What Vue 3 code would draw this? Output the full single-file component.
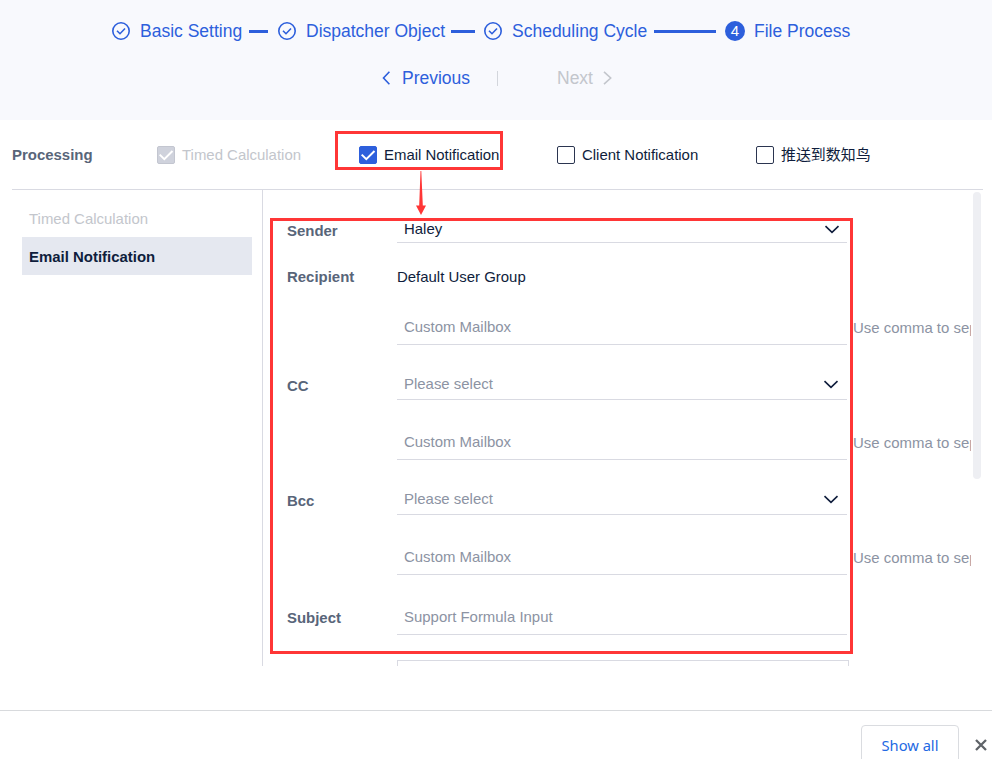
<template>
    <div id="schedule">
        <header class="head">
            <div class="steps">
                <template v-for="(step, i) in steps" :key="step">
                    <div class="step">
                        <svg v-if="i < 3" class="step-icon" viewBox="0 0 18 18">
                            <circle cx="9" cy="9" r="8.2" />
                            <path d="M5 8.700l3 3 5-5.200" />
                        </svg>
                        <i v-else class="badge">4</i>
                        <span>{{ step }}</span>
                    </div>
                    <div v-if="i < 3" class="line"></div>
                </template>
            </div>
            <div class="pager">
                <a class="prev">
                    <svg width="8" height="14" viewBox="0 0 8 14"><path d="M7.400 .8L1.500 7l5.900 6.200" /></svg>
                    <span>Previous</span>
                </a>
                <a class="next">
                    <span>Next</span>
                    <svg width="9" height="14" viewBox="0 0 9 14"><path d="M1 .8L7.700 7 1 13.200" /></svg>
                </a>
            </div>
        </header>

        <div class="processing">
            <strong>Processing</strong>
            <label v-for="item in options" :key="item.name" :class="item.state">
                <i class="box">
                    <svg v-if="item.state" width="16" height="16" viewBox="0 0 16 16"><path d="M1.700 7.600L6.300 12.200l8.200-8.200" /></svg>
                </i>
                <span>{{ item.name }}</span>
            </label>
        </div>

        <main class="content">
            <ul class="side">
                <li class="disabled">Timed Calculation</li>
                <li class="active">Email Notification</li>
            </ul>
            <div class="form">
                <div v-for="(row, i) in rows" :key="i" class="row" :class="row.type">
                    <b>{{ row.label }}</b>
                    <div class="field" :class="{ filled: row.filled }">
                        <span>{{ row.text }}</span>
                        <svg v-if="row.arrow" width="16" height="9" viewBox="0 0 16 9"><path d="M1.500 1.200L8 7.400l6.500-6.200" /></svg>
                    </div>
                    <span v-if="row.type === 'mail'" class="hint">Use comma to separate</span>
                </div>
                <div class="editor"></div>
            </div>
            <div class="scrollbar"></div>
        </main>

        <footer class="downloads">
            <button>Show all</button>
            <svg width="12" height="12" viewBox="0 0 12 12"><path d="M1 1l10 10M11 1L1 11" /></svg>
        </footer>

        <div class="mark mark-option"></div>
        <svg class="mark-arrow" width="12" height="44" viewBox="0 0 12 44">
            <path d="M5.500 0h.8l1.500 34.500H11L6 44 1 34.500h3.200z" />
        </svg>
        <div class="mark mark-form"></div>
    </div>
</template>

<script setup>
import { ref } from 'vue'

const steps = ref(['Basic Setting', 'Dispatcher Object', 'Scheduling Cycle', 'File Process'])

const options = ref([
    { name: 'Timed Calculation', state: 'disabled' },
    { name: 'Email Notification', state: 'checked' },
    { name: 'Client Notification', state: '' },
    { name: '推送到数知鸟', state: '' },
])

// type decides the height of the row
const rows = ref([
    { label: 'Sender', text: 'Haley', type: 'sender', arrow: true, filled: true },
    { label: 'Recipient', text: 'Default User Group', type: 'plain', filled: true },
    { label: '', text: 'Custom Mailbox', type: 'mail' },
    { label: 'CC', text: 'Please select', type: 'select', arrow: true },
    { label: '', text: 'Custom Mailbox', type: 'mail' },
    { label: 'Bcc', text: 'Please select', type: 'select', arrow: true },
    { label: '', text: 'Custom Mailbox', type: 'mail' },
    { label: 'Subject', text: 'Support Formula Input', type: 'subject' },
])
</script>

<style>
body {
    background-color: #fff;
    overflow: hidden;
}
</style>

<style scoped>
#schedule {
    position: relative;
    height: 759px;
    overflow: hidden;
    font-family: "Liberation Sans", "Noto Sans CJK SC", sans-serif;
    font-size: 14.950px;
    line-height: 20px;
    color: #0f1d3c;
    white-space: nowrap;
}
#schedule svg {
    display: block;
    flex: none;
    fill: none;
    stroke: currentColor;
    stroke-width: 1.6;
}
.head {
    height: 120px;
    background-color: #f8f9fd;
    color: #2d5fdc;
    font-size: 17.5px;
}
.steps {
    display: grid;
    grid-template-columns: 137px 29px 173px 33px 170px 71px auto;
    align-items: center;
    height: 62px;
    padding-left: 112px;
}
.step {
    display: flex;
    align-items: center;
    gap: 10px;
}
.step-icon {
    width: 18px;
    height: 18px;
}
.line {
    height: 3px;
    margin-top: 1px;
    margin-right: 10px;
    background-color: #2d5fdc;
}
.line:nth-child(4),
.line:nth-child(6) {
    margin-right: 9px;
}
.badge {
    width: 20px;
    height: 20px;
    margin-right: -1px;
    border-radius: 50%;
    background-color: #2d5fdc;
    color: #fff;
    font-size: 15px;
    font-style: normal;
    text-align: center;
}
.pager {
    display: flex;
    align-items: center;
    height: 32px;
    padding-left: 382px;
}
.pager a {
    display: flex;
    align-items: center;
}
.prev {
    gap: 12px;
    width: 115px;
    height: 15px;
    border-right: 1px solid #d3d6dc;
}
.next {
    gap: 10px;
    padding-left: 59px;
    color: #c3c6cc;
}
.processing {
    display: grid;
    grid-template-columns: 145px 202px 198px 199px auto;
    align-items: center;
    height: 69px;
    margin: 0 9px 0 12px;
    border-bottom: 1px solid #d9dae2;
}
.processing strong {
    color: #586579;
}
.processing label {
    display: flex;
    align-items: center;
    gap: 7px;
}
.box {
    width: 16px;
    height: 16px;
    border: 1px solid #2b3550;
    border-radius: 2px;
}
.disabled {
    color: #c3c6cc;
}
.disabled .box {
    border-color: #c3c6d0;
    background-color: #cfd2dc;
    color: #fff;
}
.checked .box {
    border-color: #2d5fdc;
    background-color: #2d5fdc;
    color: #fff;
}
#schedule .box svg {
    stroke-width: 2;
}
.content {
    display: flex;
    height: 476px;
    margin-left: 12px;
}
.side {
    width: 230px;
    margin: 0;
    padding: 9px 10px 0;
    border-right: 1px solid #d9dae2;
    list-style: none;
}
.side li {
    height: 38px;
    padding-left: 7px;
    line-height: 39px;
}
.side .active {
    background-color: #e5e8f0;
    font-weight: bold;
}
.form {
    width: 684px;
    padding-left: 24px;
    overflow: hidden;
}
.row {
    display: flex;
    align-items: center;
    height: 36px;
    margin-top: 24px;
}
.row b {
    flex: none;
    width: 110px;
    padding-top: 2px;
    color: #586579;
}
.field {
    display: flex;
    flex: none;
    align-items: center;
    justify-content: space-between;
    box-sizing: border-box;
    width: 450px;
    height: 100%;
    padding: 0 8px 0 7px;
    border-bottom: 1px solid #d9dae2;
    color: #8c93a3;
}
.field svg {
    color: #0f1d3c;
}
.filled {
    color: #0f1d3c;
}
.sender {
    height: 27px;
    margin-top: 26px;
}
.sender .field {
    padding-right: 7px;
}
.plain {
    height: 20px;
}
.plain b {
    padding-top: 0;
}
.plain .field {
    padding-left: 0;
    border: 0;
}
.plain + .mail {
    margin-top: 22px;
}
.select {
    height: 31px;
}
.hint {
    padding: 2px 0 0 6px;
    color: #8c93a3;
}
.editor {
    width: 450px;
    height: 60px;
    margin: 25px 0 0 110px;
    border: 1px solid #d9dae2;
}
.scrollbar {
    width: 8px;
    height: 287px;
    margin: 2px 0 0 2px;
    border-radius: 4px;
    background-color: #eeeff3;
}
.downloads {
    display: flex;
    align-items: center;
    gap: 16px;
    height: 68px;
    margin-top: 44px;
    padding-left: 861px;
    border-top: 1px solid #d8dadd;
    color: #5f6368;
}
.downloads button {
    box-sizing: border-box;
    width: 98px;
    height: 40px;
    padding: 0;
    border: 1px solid #dadce0;
    border-radius: 4px;
    background-color: #fff;
    color: #2369e3;
    font-family: "Noto Sans", sans-serif;
    font-size: 14.700px;
}
#schedule .downloads svg {
    stroke-width: 2.3;
}
/* red callouts over the form */
.mark {
    position: absolute;
    box-sizing: border-box;
    border: 3px solid #ff3636;
}
.mark-option {
    left: 335px;
    top: 131px;
    width: 168px;
    height: 39px;
}
.mark-form {
    left: 270px;
    top: 218px;
    width: 583px;
    height: 436px;
}
#schedule .mark-arrow {
    position: absolute;
    left: 415px;
    top: 171px;
    fill: #ff3636;
    stroke: none;
}
</style>
